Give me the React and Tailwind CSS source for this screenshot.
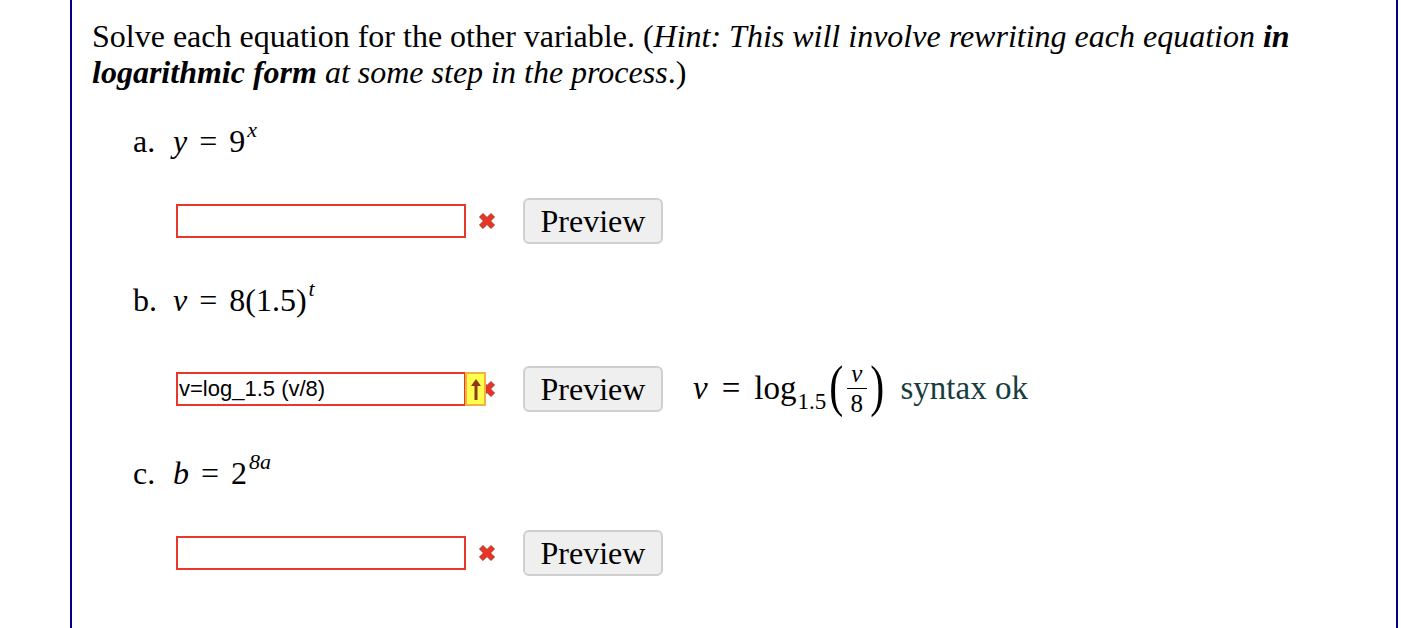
import React from 'react';

const serif = { fontFamily: '"Liberation Serif", "Times New Roman", serif' };

function RedX() {
  return (
    <svg width="20" height="20" viewBox="0 0 18 18" className="block">
      <path
        d="M2.2 5.4 L5.4 2.2 L9 5.8 L12.6 2.2 L15.8 5.4 L12.2 9 L15.8 12.6 L12.6 15.8 L9 12.2 L5.4 15.8 L2.2 12.6 L5.8 9 Z"
        fill="#ea3526"
        stroke="#8f2a22"
        strokeWidth="0.7"
        strokeLinejoin="round"
      />
    </svg>
  );
}

function Exp({ base, sup }) {
  return (
    <span className="inline-flex items-start">
      <span>{base}</span>
      <span className="text-[22px] leading-none -mt-[4px] ml-[2px] italic">{sup}</span>
    </span>
  );
}

function Label({ letter, children }) {
  return (
    <div className="flex items-end pl-[41px] text-[32px] leading-[36px]" style={serif}>
      <span className="w-[40px]">{letter}.</span>
      <span className="flex items-end gap-[12px]">{children}</span>
    </div>
  );
}

function AnswerRow({ value, warn, preview }) {
  return (
    <div className="flex items-center pl-[84px]">
      <div className="w-[290px] h-[34px] border-2 border-[#e8372b] bg-white flex items-center px-[1px] text-[22px] text-black"
        style={{ fontFamily: '"Liberation Sans", Arial, sans-serif' }}>
        {value}
      </div>
      <div className="relative ml-[11px] w-[20px] h-[20px]">
        <RedX />
        {warn && (
          <div className="absolute -left-[12px] -top-[7px] w-[21px] h-[34px] bg-[#ffff4d] border-2 border-[#f4b041] flex items-center justify-center">
            <svg width="12" height="24" viewBox="0 0 12 24">
              <path d="M6 2 L11 9 L7.5 9 L7.5 23 L4.5 23 L4.5 9 L1 9 Z" fill="#8a3a17" />
            </svg>
          </div>
        )}
      </div>
      <button
        className="ml-[26px] w-[140px] h-[46px] rounded-[6px] border-2 border-[#cfcfcf] bg-[#efefef] text-[32px] leading-none text-black"
        style={serif}
      >
        Preview
      </button>
      {preview}
    </div>
  );
}

function LogPreview() {
  return (
    <div className="ml-[30px] flex items-center text-[33px]" style={serif}>
      <span className="italic">v</span>
      <span className="mx-[14px]">=</span>
      <span>log</span>
      <span className="text-[23px] self-end mb-[-4px] ml-[1px]">1.5</span>
      <span className="text-[56px] leading-none font-light scale-x-75 ml-[1px] -mt-[6px]">(</span>
      <span className="flex flex-col items-center text-[25px] leading-[23px] mx-[1px]">
        <span className="italic">v</span>
        <span className="w-[20px] h-[1px] bg-black my-[3px]"></span>
        <span>8</span>
      </span>
      <span className="text-[56px] leading-none font-light scale-x-75 -mt-[6px]">)</span>
      <span className="ml-[14px] text-[#173e3e]">syntax ok</span>
    </div>
  );
}

export default function App() {
  return (
    <div className="min-h-screen bg-white">
      <div className="ml-[70px] w-[1328px] min-h-[628px] border-l-2 border-r-2 border-[#000080] pl-[20px] pt-[18px]">
        <p className="text-[32px] leading-[36px] text-black pr-[60px]" style={serif}>
          Solve each equation for the other variable. (<i>Hint: This will involve rewriting each equation <b>in logarithmic form</b> at some step in the process</i>.)
        </p>

        <div className="mt-[33px]">
          <Label letter="a">
            <span className="italic">y</span>
            <span>=</span>
            <Exp base="9" sup="x" />
          </Label>
        </div>
        <div className="mt-[39px]">
          <AnswerRow value="" />
        </div>

        <div className="mt-[38px]">
          <Label letter="b">
            <span className="italic">v</span>
            <span>=</span>
            <Exp base="8(1.5)" sup="t" />
          </Label>
        </div>
        <div className="mt-[44px]">
          <AnswerRow value="v=log_1.5 (v/8)" warn preview={<LogPreview />} />
        </div>

        <div className="mt-[40px]">
          <Label letter="c">
            <span className="italic">b</span>
            <span>=</span>
            <Exp base="2" sup="8a" />
          </Label>
        </div>
        <div className="mt-[39px]">
          <AnswerRow value="" />
        </div>
      </div>
    </div>
  );
}
